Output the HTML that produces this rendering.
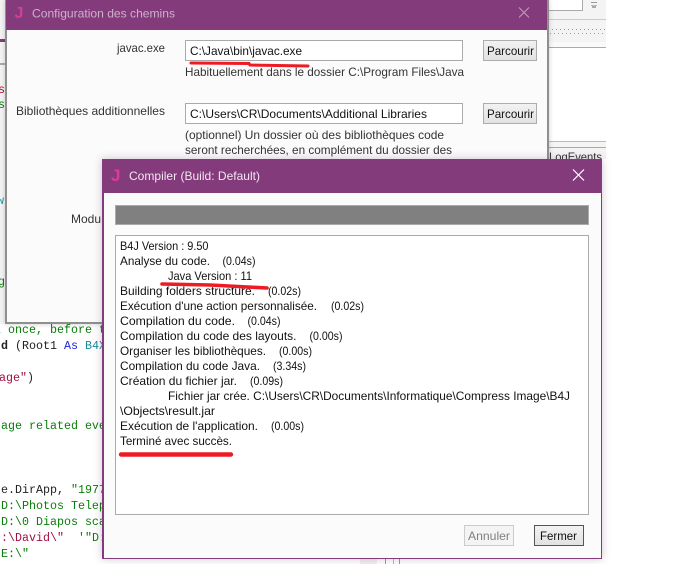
<!DOCTYPE html>
<html lang="fr"><head><meta charset="utf-8"><title>Compiler</title>
<style>
html,body{margin:0;padding:0;background:#fff}
body{position:relative;width:674px;height:564px;overflow:hidden;font-family:"Liberation Sans",sans-serif;font-size:12px;color:#1a1a1a}
div{position:absolute;box-sizing:border-box}
.c{font-family:"Liberation Mono",monospace;font-size:11.67px;white-space:nowrap;line-height:16px;height:16px;left:1px;color:#0a7d0a}
.box{background:#fff;border:1px solid #aaa}
.btn{background:linear-gradient(#f2f2f2,#e2e2e2);border:1px solid #adadad}
svg{position:absolute;left:0;top:0}
svg text{font-family:"Liberation Sans",sans-serif;font-size:12px}
.d{fill:#111}.g{fill:#333}
</style></head><body>

<!-- left code strip -->
<div style="left:0;top:0;width:6px;height:324px;background:#f4f4f4"></div>
<div style="left:0;top:39px;width:6px;height:3px;background:#843b7c"></div>
<div style="left:0;top:63px;width:6px;height:2px;background:#aaa"></div>
<div class="c" style="left:-2px;top:82px;color:#b01030">s</div>
<div class="c" style="left:-2px;top:97px;color:#0a7d0a">s</div>
<div class="c" style="left:-3px;top:193px;color:#1a9aa8">w</div>
<div class="c" style="left:-2px;top:274px;color:#0a7d0a">g</div>

<div class="c" style="top:322px;left:-6px;color:#0a7d0a"><span style="color:#22b8c8">l</span>&nbsp;once, before t</div>
<div class="c" style="top:338px;color:#222"><b>d</b> (Root1 <span style="color:#2222dd">As</span> <span style="color:#158a9a">B4X</span></div>
<div class="c" style="top:370px;left:-1px;color:#a01040">age"<span style="color:#222">)</span></div>
<div class="c" style="top:418px">age related eve</div>
<div class="c" style="top:482px;color:#222">e.DirApp, <span style="color:#0a7d0a">"1977</span></div>
<div class="c" style="top:498px">D:\Photos Telep</div>
<div class="c" style="top:514px">D:\0 Diapos sca</div>
<div class="c" style="top:530px;color:#a01040">:\David\"&nbsp; <span style="color:#0a7d0a">'"D:</span></div>
<div class="c" style="top:546px">E:\"</div>

<!-- right background -->
<div style="left:548px;top:0;width:58px;height:159px;background:#f4f4f4"></div>
<div style="left:548px;top:0;width:35px;height:11px;background:#fff;border:1px solid #aaa;border-top:0;border-left:0"></div>
<div style="left:591px;top:2px;width:6px;height:1px;background:#999"></div>
<div style="left:591px;top:5px;width:6px;height:1px;background:#bbb"></div>
<div style="left:592px;top:6px;width:4px;height:2px;background:#aaa"></div>
<div style="left:548px;top:19px;width:58px;height:1px;background:#ccc"></div>
<div style="left:548px;top:29px;width:58px;height:1px;background:repeating-linear-gradient(90deg,#999 0 1px,transparent 1px 4px)"></div>
<div style="left:550px;top:33px;width:56px;height:1px;background:repeating-linear-gradient(90deg,#999 0 1px,transparent 1px 4px)"></div>
<div style="left:548px;top:42px;width:58px;height:5px;background:#fafafa"></div>
<div style="left:548px;top:47px;width:58px;height:1px;background:#aaa"></div>
<div style="left:548px;top:48px;width:58px;height:93px;background:#fff"></div>
<div style="left:548px;top:141px;width:58px;height:1px;background:#bbb"></div>
<div style="left:548px;top:147px;width:58px;height:1px;background:#aaa"></div>
<svg width="674" height="564"><text class="g" x="549" y="161" textLength="53" lengthAdjust="spacingAndGlyphs">LogEvents</text></svg>
<div style="left:360px;top:559px;width:17px;height:5px;background:#f0f0f0"></div>
<div style="left:385px;top:559px;width:1px;height:5px;background:#999"></div>
<div style="left:393px;top:559px;width:1px;height:5px;background:#bbb"></div>
<div style="left:399px;top:559px;width:1px;height:5px;background:#999"></div>

<!-- back dialog -->
<div style="left:5px;top:0;width:544px;height:324px;background:#fbfbfb;border:2px solid #8f8f8f;border-width:0 2px 2px 2px;box-shadow:0 0 5px rgba(0,0,0,.2)"></div>
<div style="left:6px;top:0;width:541px;height:30px;background:#843b7c"></div>
<div class="box" style="left:185px;top:40px;width:278px;height:21px"></div>
<div class="btn" style="left:483px;top:40px;width:54px;height:21px"></div>
<div class="box" style="left:185px;top:103px;width:278px;height:21px"></div>
<div class="btn" style="left:483px;top:103px;width:54px;height:21px"></div>
<svg width="674" height="564">
<text x="14.500" y="18" style="font-size:16px;font-weight:bold;fill:#d23f96">J</text>
<text x="32" y="17.500" style="fill:#cdb1c9" textLength="143" lengthAdjust="spacingAndGlyphs">Configuration des chemins</text>
<path d="M519 7.500L529 17.500M529 7.500L519 17.500" stroke="#bd9ab8" stroke-width="1.100" fill="none"/>
<text class="g" x="117" y="52" textLength="48" lengthAdjust="spacingAndGlyphs">javac.exe</text>
<text class="d" x="190" y="55" textLength="112" lengthAdjust="spacingAndGlyphs">C:\Java\bin\javac.exe</text>
<text class="d" x="487" y="55" textLength="47" lengthAdjust="spacingAndGlyphs">Parcourir</text>
<text class="g" x="185" y="76" textLength="279" lengthAdjust="spacingAndGlyphs">Habituellement dans le dossier C:\Program Files\Java</text>
<text class="g" x="16" y="115" textLength="149" lengthAdjust="spacingAndGlyphs">Bibliothèques additionnelles</text>
<text class="d" x="190" y="118" textLength="237" lengthAdjust="spacingAndGlyphs">C:\Users\CR\Documents\Additional Libraries</text>
<text class="d" x="487" y="118" textLength="47" lengthAdjust="spacingAndGlyphs">Parcourir</text>
<text class="g" x="185" y="139" textLength="259" lengthAdjust="spacingAndGlyphs">(optionnel) Un dossier où des bibliothèques code</text>
<text class="g" x="185" y="154" textLength="267" lengthAdjust="spacingAndGlyphs">seront recherchées, en complément du dossier des</text>
<text class="g" x="71" y="223">Modu</text>
</svg>

<!-- front dialog -->
<div style="left:102px;top:159px;width:500px;height:400px;background:#fbfbfb;border:1px solid #843b7c;border-left-width:2px;box-shadow:0 0 8px rgba(110,60,110,.3)"></div>
<div style="left:102px;top:159px;width:500px;height:34px;background:#843b7c"></div>
<div style="left:115px;top:205px;width:474px;height:20px;background:#808080;border:1px solid #aaa"></div>
<div class="box" style="left:115px;top:235px;width:474px;height:280px"></div>
<div class="btn" style="left:464px;top:525px;width:50px;height:21px;background:#f4f4f4;border-color:#ccc"></div>
<div class="btn" style="left:534px;top:525px;width:50px;height:21px;border-color:#555"></div>

<svg width="674" height="564" style="z-index:5">
<text x="111" y="181" style="font-size:17px;font-weight:bold;fill:#e0389c">J</text>
<text x="129" y="180" style="fill:#f2e6f0" textLength="131" lengthAdjust="spacingAndGlyphs">Compiler (Build: Default)</text>
<path d="M573 169.500L584 180.500M584 169.500L573 180.500" stroke="#fff" stroke-width="1.200" fill="none"/>

<text class="d" x="120" y="250" textLength="88.500" lengthAdjust="spacingAndGlyphs">B4J Version : 9.50</text>
<text class="d" x="120" y="265" textLength="90" lengthAdjust="spacingAndGlyphs">Analyse du code.</text>
<text class="d" x="222.500" y="265" textLength="33" lengthAdjust="spacingAndGlyphs">(0.04s)</text>
<text class="d" x="168" y="280" textLength="84" lengthAdjust="spacingAndGlyphs">Java Version : 11</text>
<text class="d" x="120" y="295" textLength="135" lengthAdjust="spacingAndGlyphs">Building folders structure.</text>
<text class="d" x="268" y="295" textLength="33" lengthAdjust="spacingAndGlyphs">(0.02s)</text>
<text class="d" x="120" y="310" textLength="197" lengthAdjust="spacingAndGlyphs">Exécution d'une action personnalisée.</text>
<text class="d" x="331" y="310" textLength="33" lengthAdjust="spacingAndGlyphs">(0.02s)</text>
<text class="d" x="120" y="325" textLength="115" lengthAdjust="spacingAndGlyphs">Compilation du code.</text>
<text class="d" x="247.500" y="325" textLength="33" lengthAdjust="spacingAndGlyphs">(0.04s)</text>
<text class="d" x="120" y="340" textLength="176.500" lengthAdjust="spacingAndGlyphs">Compilation du code des layouts.</text>
<text class="d" x="309.500" y="340" textLength="33" lengthAdjust="spacingAndGlyphs">(0.00s)</text>
<text class="d" x="120" y="355" textLength="146" lengthAdjust="spacingAndGlyphs">Organiser les bibliothèques.</text>
<text class="d" x="279" y="355" textLength="33" lengthAdjust="spacingAndGlyphs">(0.00s)</text>
<text class="d" x="120" y="370" textLength="140" lengthAdjust="spacingAndGlyphs">Compilation du code Java.</text>
<text class="d" x="273" y="370" textLength="33" lengthAdjust="spacingAndGlyphs">(3.34s)</text>
<text class="d" x="120" y="385" textLength="117" lengthAdjust="spacingAndGlyphs">Création du fichier jar.</text>
<text class="d" x="250" y="385" textLength="33" lengthAdjust="spacingAndGlyphs">(0.09s)</text>
<text class="d" x="168" y="400" textLength="402" lengthAdjust="spacingAndGlyphs">Fichier jar crée. C:\Users\CR\Documents\Informatique\Compress Image\B4J</text>
<text class="d" x="120" y="415" textLength="95" lengthAdjust="spacingAndGlyphs">\Objects\result.jar</text>
<text class="d" x="120" y="430" textLength="138" lengthAdjust="spacingAndGlyphs">Exécution de l'application.</text>
<text class="d" x="271" y="430" textLength="33" lengthAdjust="spacingAndGlyphs">(0.00s)</text>
<text class="d" x="120" y="445" textLength="112" lengthAdjust="spacingAndGlyphs">Terminé avec succès.</text>

<text x="468" y="540" style="fill:#808080" textLength="42" lengthAdjust="spacingAndGlyphs">Annuler</text>
<text class="d" x="540" y="540" textLength="37" lengthAdjust="spacingAndGlyphs">Fermer</text>

<path d="M191 63L249 63.500L250 65L308 66" stroke="#ed1c24" stroke-width="3" stroke-linecap="round" fill="none"/>
<path d="M162 284L210 285L267 288" stroke="#ed1c24" stroke-width="3.600" stroke-linecap="round" fill="none"/>
<path d="M121 454.500L231 454.500" stroke="#ed1c24" stroke-width="4.400" stroke-linecap="round" fill="none"/>
</svg>
</body></html>
